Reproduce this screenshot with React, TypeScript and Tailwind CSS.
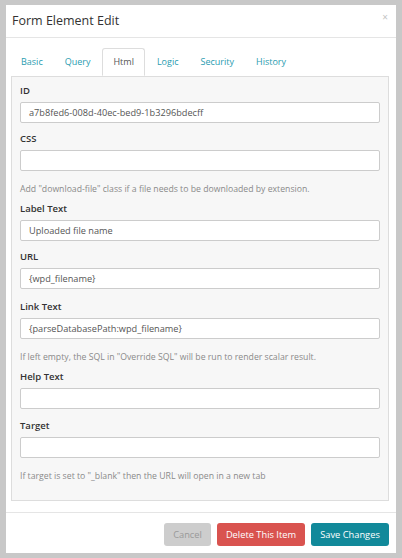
import React from "react";

const tabs = ["Basic", "Query", "Html", "Logic", "Security", "History"];

type Field = { label: string; value?: string; help?: string; gap: string };

const fields: Field[] = [
  { label: "ID", value: "a7b8fed6-008d-40ec-bed9-1b3296bdecff", gap: "mb-[9px]" },
  {
    label: "CSS",
    help: 'Add "download-file" class if a file needs to be downloaded by extension.',
    gap: "mb-[6px]",
  },
  { label: "Label Text", value: "Uploaded file name", gap: "mb-[9px]" },
  { label: "URL", value: "{wpd_filename}", gap: "mb-[11px]" },
  {
    label: "Link Text",
    value: "{parseDatabasePath:wpd_filename}",
    help: 'If left empty, the SQL in "Override SQL" will be run to render scalar result.',
    gap: "mb-[6px]",
  },
  { label: "Help Text", gap: "mb-[10px]" },
  {
    label: "Target",
    help: 'If target is set to "_blank" then the URL will open in a new tab',
    gap: "mb-[6px]",
  },
];

export default function App() {
  return (
    <div
      className="w-[402px] h-[558px] bg-[#c8c8c8] pt-[5px] pl-[6px] pr-[6px] pb-[5px]"
      style={{ fontFamily: '"Open Sans", "Liberation Sans", sans-serif' }}
    >
      <div className="h-[548px] bg-white flex flex-col">
        {/* header */}
        <div className="h-[33px] border-b border-[#e5e5e5] flex justify-between pl-[6px] pr-[8px]">
          <span className="text-[12.5px] leading-[32px] text-[#333]">Form Element Edit</span>
          <span className="text-[10px] text-[#c4c4c4] leading-none pt-[7px]">×</span>
        </div>

        {/* body */}
        <div className="pl-[5px] pr-[7px] pt-[10px]">
          <div className="flex">
            {tabs.map((t) =>
              t === "Html" ? (
                <div
                  key={t}
                  className="h-[28px] px-[10px] flex items-center text-[9px] text-[#555] bg-white border border-[#ddd] border-b-white rounded-t-[3px] -mb-px relative z-10 mr-[2px]"
                >
                  {t}
                </div>
              ) : (
                <div
                  key={t}
                  className="h-[28px] px-[10px] flex items-center text-[9px] text-[#2a9cb0] mr-[2px]"
                >
                  {t}
                </div>
              )
            )}
          </div>
          <div className="bg-[#f7f7f7] border border-[#ddd] px-[8px] pt-[7px] pb-[11px]">
            {fields.map((f) => (
              <div key={f.label} className={f.gap}>
                <div className="h-[14px] leading-[14px] text-[9.5px] font-semibold text-[#333] mb-[4px]">
                  {f.label}
                </div>
                <div className="h-[21px] bg-white border border-[#ccc] rounded-[2px] flex items-center pl-[8px] text-[9.2px] text-[#555]">
                  {f.value}
                </div>
                {f.help && (
                  <div className="mt-[11px] h-[14px] leading-[14px] text-[8.7px] text-[#8a8a8a] whitespace-nowrap">
                    {f.help}
                  </div>
                )}
              </div>
            ))}
          </div>
        </div>

        {/* footer */}
        <div className="mt-[11px] border-t border-[#e5e5e5] flex justify-end gap-[6px] pr-[7px] pt-[10px]">
          <button className="h-[23px] w-[47px] rounded-[3px] bg-[#cdcdcd] text-[9.3px] text-[#999]">
            Cancel
          </button>
          <button className="h-[23px] w-[88px] rounded-[3px] bg-[#d9534f] text-[9.3px] text-white">
            Delete This Item
          </button>
          <button className="h-[23px] w-[78px] rounded-[3px] bg-[#11899a] text-[9.3px] text-white">
            Save Changes
          </button>
        </div>
      </div>
    </div>
  );
}
